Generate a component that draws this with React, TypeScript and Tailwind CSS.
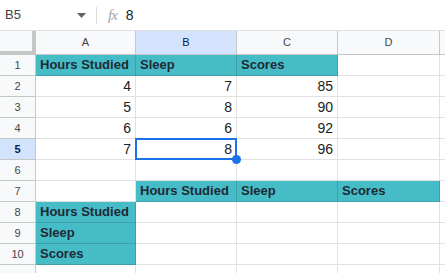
import React from 'react';

const cols = ['A', 'B', 'C', 'D'];

type Cell = { v?: string; head?: boolean; teal?: boolean; right?: boolean };

const rows: Cell[][] = [
  [{ v: 'Hours Studied', head: true, teal: true }, { v: 'Sleep', head: true, teal: true }, { v: 'Scores', head: true, teal: true }, {}],
  [{ v: '4', right: true }, { v: '7', right: true }, { v: '85', right: true }, {}],
  [{ v: '5', right: true }, { v: '8', right: true }, { v: '90', right: true }, {}],
  [{ v: '6', right: true }, { v: '6', right: true }, { v: '92', right: true }, {}],
  [{ v: '7', right: true }, { v: '8', right: true }, { v: '96', right: true }, {}],
  [{}, {}, {}, {}],
  [{}, { v: 'Hours Studied', head: true, teal: true }, { v: 'Sleep', head: true, teal: true }, { v: 'Scores', head: true, teal: true }],
  [{ v: 'Hours Studied', head: true, teal: true }, {}, {}, {}],
  [{ v: 'Sleep', head: true, teal: true }, {}, {}, {}],
  [{ v: 'Scores', head: true, teal: true }, {}, {}, {}],
];

const App = () => {
  return (
    <div className="w-[445px] h-[273px] overflow-hidden bg-white text-[#202124]" style={{ fontFamily: '"Liberation Sans", Arial, sans-serif' }}>
      {/* formula bar */}
      <div className="h-[31px] flex items-center border-b border-[#e1e1e1] text-[13px]">
        <span className="pl-[5px] w-[76px] text-[#3c4043]">B5</span>
        <svg width="9" height="5" viewBox="0 0 9 5" className="ml-[1px]"><path d="M0 0h9L4.5 5z" fill="#5f6368" /></svg>
        <div className="ml-[10px] w-px h-[17px] bg-[#dadce0]" />
        <span className="ml-[11px] text-[15px] italic text-[#a0a3a7] tracking-[-1px]" style={{ fontFamily: '"Liberation Serif", serif' }}>fx</span>
        <span className="ml-[9px] text-[14px] text-[#202124]">8</span>
      </div>

      <div className="grid grid-cols-[36px_100px_101px_101px_102px_1fr]">
        {/* column headers */}
        <div className="h-[24px] bg-[#f8f9fa] border-r-[4px] border-b-[4px] border-[#c4c7c5]" />
        {cols.map(c => (
          <div key={c} className={`h-[24px] flex items-center justify-center text-[11px] border-r border-b border-[#c4c7c5] ${c === 'B' ? 'bg-[#d3e3fd] text-[#041e49]' : 'bg-[#f8f9fa] text-[#444746]'}`}>{c}</div>
        ))}
        <div className="h-[24px] bg-[#f8f9fa] border-b border-[#c4c7c5]" />

        {rows.map((r, i) => (
          <React.Fragment key={i}>
            <div className={`h-[21px] flex items-center justify-center text-[11px] border-r border-b border-[#c4c7c5] ${i === 4 ? 'bg-[#d3e3fd] text-[#041e49] font-bold' : 'bg-[#f8f9fa] text-[#444746]'}`}>{i + 1}</div>
            {r.map((c, j) => {
              const selected = i === 4 && j === 1;
              return (
                <div
                  key={j}
                  className={`relative h-[21px] flex items-center px-[4px] text-[13px] border-r border-b ${c.teal ? 'bg-[#46bdc6] border-black/15' : 'border-[#e1e1e1]'} ${c.head ? 'font-bold text-[#1f2937]' : ''} ${c.right ? 'justify-end text-[14px]' : ''}`}
                >
                  {c.v}
                  {selected && (
                    <>
                      <div className="absolute -left-px -top-px -right-px -bottom-px border-2 border-[#1a73e8]" />
                      <div className="absolute z-10 -right-[5px] -bottom-[5px] w-[9px] h-[9px] rounded-full bg-[#1a73e8]" />
                    </>
                  )}
                </div>
              );
            })}
            <div className="h-[21px] border-b border-[#e1e1e1]" />
          </React.Fragment>
        ))}
        {/* row 11, mostly below the fold */}
        <div className="h-[21px] flex items-start justify-center pt-[6px] text-[11px] border-r border-[#c4c7c5] bg-[#f8f9fa] text-[#444746]">11</div>
        <div className="h-[21px] border-r border-[#e1e1e1]" />
        <div className="h-[21px] border-r border-[#e1e1e1]" />
        <div className="h-[21px] border-r border-[#e1e1e1]" />
        <div className="h-[21px] border-r border-[#e1e1e1]" />
        <div className="h-[21px]" />
      </div>
    </div>
  );
};

export default App;
